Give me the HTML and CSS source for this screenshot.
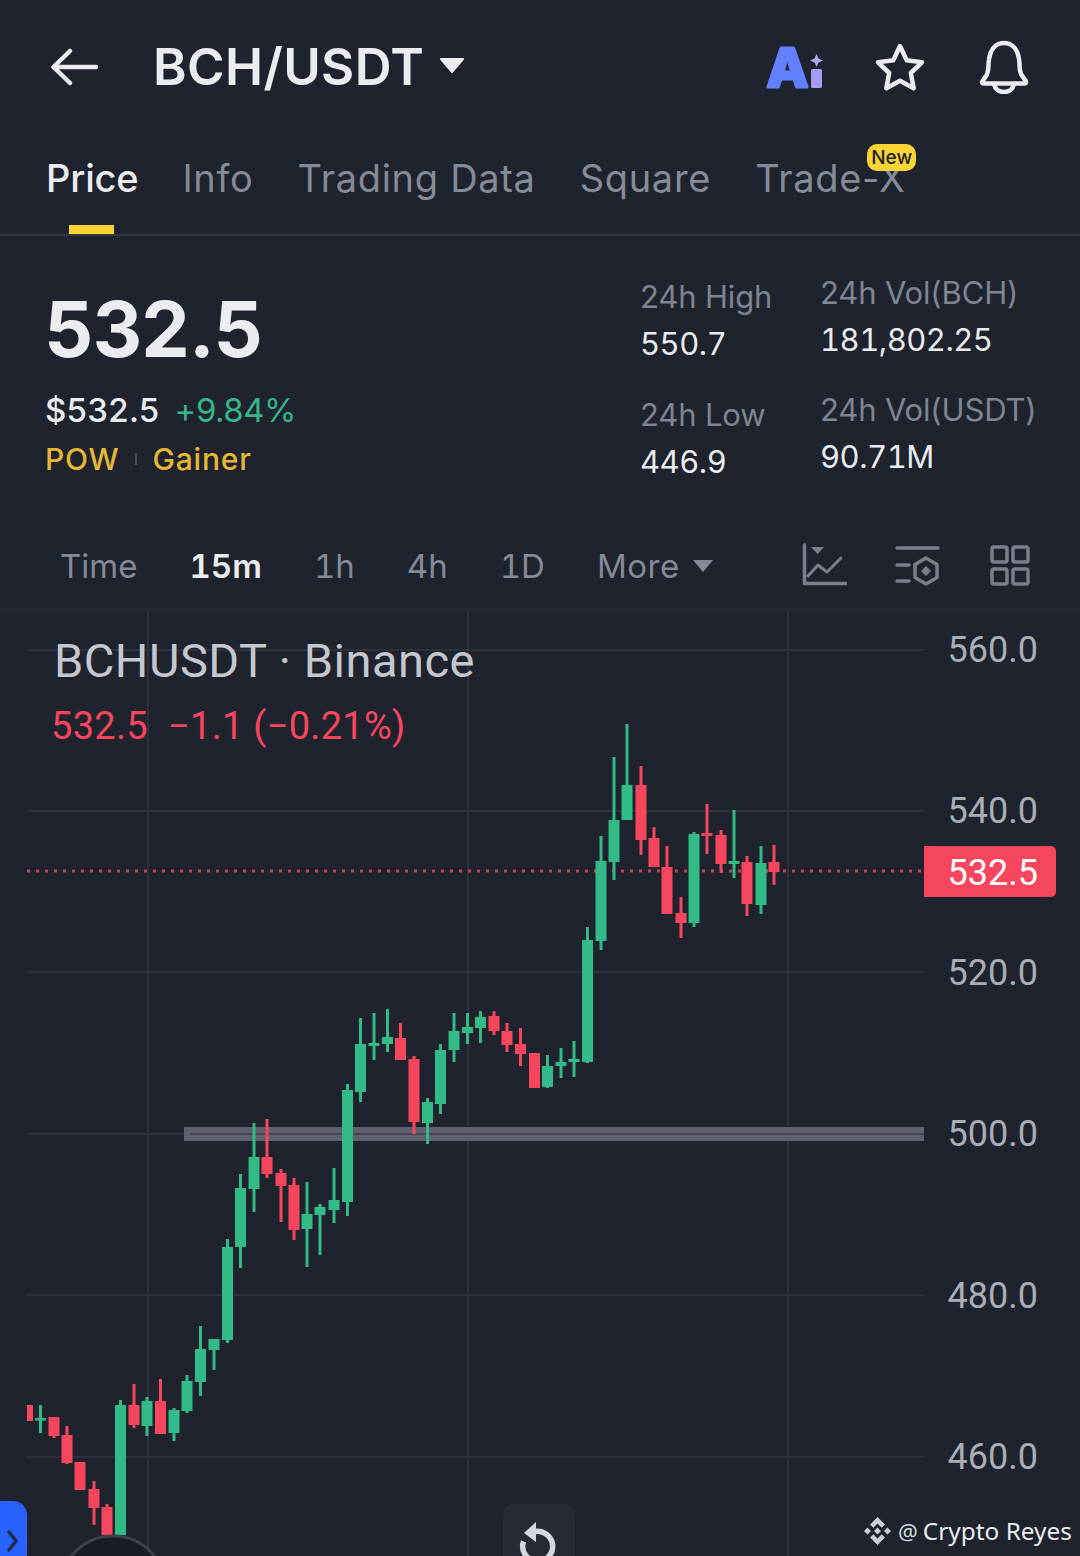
FILE: index.html
```html
<!DOCTYPE html>
<html lang="en">
<head>
<meta charset="utf-8">
<title>BCH/USDT</title>
<link rel="stylesheet" href="styles.css">
</head>
<body>
<div class="screen">
  <header class="topbar">
    <svg class="back" width="48" height="38" viewBox="0 0 48 38"><path d="M46 19H4M20 3 3.500 19 20 35"/></svg>
    <h1 class="pair">BCH/USDT</h1>
    <svg class="caret" width="26" height="17" viewBox="0 0 26 17"><path d="M2 2h22L13 15z"/></svg>
    <div class="top-actions">
      <svg class="ai" width="58" height="70" viewBox="0 0 58 70">
        <text class="ai-a" x="21.500" y="54">A</text>
        <rect class="ai-i" x="45" y="36" width="11" height="19" rx="1.500"/>
        <path class="ai-star" d="M50.500 21l2 4.500 4.500 2-4.500 2-2 4.500-2-4.500-4.500-2 4.500-2z"/>
      </svg>
      <svg class="line-icon star" width="52" height="50" viewBox="0 0 52 50"><path d="M26 4l6.700 14.300 15.300 2-11.200 10.700 2.900 15.200L26 38.700 12.300 46.200l2.900-15.200L4 20.300l15.300-2z"/></svg>
      <svg class="line-icon bell" width="52" height="54" viewBox="0 0 52 54"><path d="M4 42.500c0-2 3-4 5-8 2-5 1-9 2-15C12.500 9 18 3 26 3s13.500 6 15 16c1 6 0 10 2 15 2 4 5 6 5 8 0 1-1 1.500-2 1.500H6c-1 0-2-.5-2-1.500z"/><path d="M16 44c1 5 5 8 10 8s9-3 10-8"/></svg>
    </div>
  </header>

  <nav class="tabs">
    <a class="tab tab-active">Price</a>
    <a class="tab">Info</a>
    <a class="tab">Trading Data</a>
    <a class="tab">Square</a>
    <a class="tab tab-new">Trade-X<span class="badge">New</span></a>
  </nav>

  <section class="stats">
    <div class="price-block">
      <div class="price">532.5</div>
      <div class="sub"><span class="usd">$532.5</span><span class="change">+9.84%</span></div>
      <div class="tags"><span>POW</span><i class="tag-sep"></i><span>Gainer</span></div>
    </div>
    <div class="stat-col stat-col-a">
      <div class="stat"><div class="stat-label">24h High</div><div class="stat-value">550.7</div></div>
      <div class="stat"><div class="stat-label">24h Low</div><div class="stat-value">446.9</div></div>
    </div>
    <div class="stat-col stat-col-b">
      <div class="stat"><div class="stat-label">24h Vol(BCH)</div><div class="stat-value">181,802.25</div></div>
      <div class="stat"><div class="stat-label">24h Vol(USDT)</div><div class="stat-value">90.71M</div></div>
    </div>
  </section>

  <div class="intervals">
    <span class="iv">Time</span>
    <span class="iv iv-num iv-active">15m</span>
    <span class="iv iv-num">1h</span>
    <span class="iv iv-num">4h</span>
    <span class="iv iv-num">1D</span>
    <span class="iv iv-more">More<svg class="more-caret" width="22" height="14" viewBox="0 0 22 14"><path d="M1 1h20L11 13z"/></svg></span>
    <div class="tools">
      <svg class="tool" width="46" height="44" viewBox="0 0 46 44"><path d="M3.500 2v38.500H45"/><path class="thin" d="M7 33l10-11 9 7 14-14"/><path class="solid" d="M10 4h13l-6.500 7z"/></svg>
      <svg class="tool" width="46" height="44" viewBox="0 0 46 44"><path d="M2 5h41M2 22h12M2 38h12"/><path d="M31 15l11 6.500v13L31 41l-11-6.500v-13z"/><path class="solid" d="M31 23l5 5-5 5-5-5z"/></svg>
      <svg class="tool" width="42" height="42" viewBox="0 0 42 42"><rect x="3" y="3" width="15" height="15" rx="2"/><rect x="24" y="3" width="15" height="15" rx="2"/><rect x="3" y="25" width="15" height="15" rx="2"/><rect x="24" y="25" width="15" height="15" rx="2"/></svg>
    </div>
  </div>

  <main class="chart">
    <svg class="plot" width="1080" height="945" viewBox="0 611 1080 945">
      <path class="grid" d="M27 650H924M27 811H924M27 972H924M27 1295H924M27 1457H924M27 1134H924M148 611V1556M468 611V1556M788 611V1556"/>
      <rect class="level" x="184" y="1127" width="740" height="14"/>
      <path class="level-inner" d="M190 1134H924"/>
      <path class="last" d="M27 871H924"/>
      <path class="wick up" d="M40.500 1405V1433M120.500 1400V1535M147 1397V1436M174 1408V1441M187 1375V1413M200.500 1326V1396M214 1339V1370M227.500 1239V1343M240.500 1174V1268M254 1123V1212M307 1182V1267M320 1204V1255M334 1168V1223M347.500 1084V1216M360.500 1018V1102M374 1013V1060M387.500 1009V1052M427.500 1098V1144M440.500 1044V1114M454 1013V1062M467.500 1013V1044M480.500 1011V1043M547.500 1055V1088M561 1048V1078M574 1041V1077M587.500 927V1063M601 836V950M614 757V880M627 724V820M694 832V927M734 810V878M761 846V914"/>
      <path class="wick down" d="M54 1417V1438M67 1426V1464M94 1481V1525M107 1504V1535M134 1384V1428M160.500 1379V1434M267 1119V1178M281 1169V1222M294 1178V1240M400.500 1023V1060M414 1056V1134M494 1011V1035M507 1023V1052M520.500 1028V1066M534.500 1053V1088M641 766V855M654 827V867M667 846V914M681 897V938M707 804V854M721 830V873M747 856V916M774 845V885"/>
      <path class="body up" d="M40.500 1418V1420.500M120.500 1405V1535M147 1401V1426M174 1410V1433M187 1381V1411M200.500 1349V1382M214 1339V1350M227.500 1247V1340M240.500 1188V1247M254 1157V1189M307 1214V1229M320 1207V1215M334 1200V1210M347.500 1090V1202M360.500 1044V1092M374 1043V1046M387.500 1037V1044M427.500 1102V1123M440.500 1050V1104M454 1031V1050M467.500 1027V1033M480.500 1017V1028M547.500 1066V1087M561 1062V1066M574 1059V1062M587.500 940V1062M601 861V941M614 820V862M627 785V820M694 834V923M734 861V864M761 863V905"/>
      <path class="body down" d="M54 1417V1436M67 1435V1463M80 1462V1490M94 1489V1508M107 1507V1535M134 1405V1425M160.500 1401V1434M267 1157V1174M281 1173V1186M294 1185V1230M400.500 1038V1060M414 1059V1122M494 1016V1031M507 1031V1045M520.500 1044V1054M534.500 1053V1088M641 785V840M654 838V867M667 867V914M681 913V923M707 833V836M721 835V864M747 862V904M774 862V872"/>
      <rect class="clip-body" x="27" y="1405" width="6" height="16"/>
      <g class="axis">
        <text x="1038" y="662">560.0</text>
        <text x="1038" y="823">540.0</text>
        <text x="1038" y="985">520.0</text>
        <text x="1038" y="1146">500.0</text>
        <text x="1038" y="1308">480.0</text>
        <text x="1038" y="1469">460.0</text>
      </g>
      <path class="tag-bg" d="M924 846H1051a5 5 0 0 1 5 5V892a5 5 0 0 1-5 5H924z"/>
      <text class="tag-text" x="1038" y="885">532.5</text>
      <circle class="dial" cx="113" cy="1589" r="53"/>
    </svg>

    <div class="legend">
      <div class="legend-title">BCHUSDT · Binance</div>
      <div class="legend-ohlc"><span>532.5</span><span>−1.1 (−0.21%)</span></div>
    </div>

    <div class="side-tab"><svg width="14" height="22" viewBox="0 0 14 22"><path d="M3 2l7 9-7 9"/></svg></div>

    <div class="reset">
      <svg width="40" height="44" viewBox="0 0 40 44"><path class="reset-arc" d="M13 10.500a15 15 0 1 1-8.500 9"/><path class="reset-head" d="M17 0 5 11l12 9z"/></svg>
    </div>

    <div class="watermark">
      <svg class="bn" width="27" height="28" viewBox="0 0 27 28"><path d="M13.500 0l7.500 7.500-3.300 3.300-4.200-4.200-4.200 4.200L6 7.500zM13.500 28L21 20.500l-3.300-3.300-4.200 4.200-4.200-4.200L6 20.500zM13.500 10.500L17 14l-3.500 3.500L10 14zM3.500 10.500L7 14l-3.500 3.500L0 14zM23.500 10.500L27 14l-3.500 3.500L20 14z"/></svg>
      <span class="wm-at">@</span><span class="wm-name">Crypto Reyes</span>
    </div>
  </main>
</div>
</body>
</html>
```

FILE: styles.css
```css
* { box-sizing: border-box; }
html, body { margin: 0; padding: 0; background: #1e232e; }
.screen {
  width: 1080px; height: 1556px; overflow: hidden;
  display: flex; flex-direction: column;
  background: #1e232e; color: #eaecef;
  font-family: Inter, "Liberation Sans", sans-serif;
}

/* top bar */
.topbar { height: 134px; flex: none; display: flex; align-items: center; padding: 0 50px 0 50px; }
.back { fill: none; stroke: #eaecef; stroke-width: 4.500; stroke-linecap: round; stroke-linejoin: round; }
.pair { margin: -2px 0 0 55px; font-size: 51px; font-weight: 600; letter-spacing: 0.4px; line-height: 1; }
.caret { margin: -4px 0 0 15px; fill: #eaecef; stroke: #eaecef; stroke-width: 2; stroke-linejoin: round; }
.top-actions { margin-left: auto; display: flex; align-items: center; }
.ai { margin: 2px 50px 0 0; }
.star { margin-right: 52px; }
.ai-a { font-family: Inter, sans-serif; font-size: 54px; font-weight: 800; fill: #6381ff; stroke: #6381ff; stroke-width: 3; stroke-linejoin: round; text-anchor: middle; }
.ai-i { fill: #a79cf5; }
.ai-star { fill: #b3a5ee; }
.line-icon { fill: none; stroke: #eaecef; stroke-width: 4.500; stroke-linejoin: round; stroke-linecap: round; }

/* tabs */
.tabs { height: 102px; flex: none; display: flex; gap: 44px; padding: 21px 0 0 46px; border-bottom: 2px solid #333943; }
.tab { position: relative; font-size: 38px; line-height: 46px; color: #858a96; height: 79px; letter-spacing: 0.7px; }
.tab-active { color: #eaecef; font-weight: 500; letter-spacing: -0.2px; }
.tab-active::after { content: ""; position: absolute; left: 23px; right: 24px; bottom: 0; height: 9px; background: #fcd535; }
.badge {
  position: absolute; left: 112px; top: -11px; width: 49px; height: 27px; border-radius: 10px;
  background: #fcd535; color: #1e2329; font-size: 19px; font-weight: 500; line-height: 27px; text-align: center; letter-spacing: 0;
}

/* stats */
.stats { height: 294px; flex: none; position: relative; display: flex; padding-left: 44px; }
.price-block { width: 596px; padding-top: 46px; }
.price { font-size: 77px; font-weight: 700; line-height: 94px; letter-spacing: -0.8px; }
.sub { margin-top: 9px; padding-left: 1px; display: flex; gap: 15px; font-size: 33px; line-height: 50px; }
.usd { font-weight: 500; color: #eaecef; letter-spacing: 0.3px; }
.change { color: #35b685; letter-spacing: -0.5px; }
.tags { display: flex; align-items: center; padding-left: 1px; font-size: 30px; font-weight: 500; line-height: 48px; color: #e5b833; letter-spacing: 0.8px; }
.tag-sep { width: 2px; height: 12px; margin: 0 16px 0 15px; background: #474d57; }
.stat-col { display: flex; flex-direction: column; }
.stat-col-a { width: 180px; padding-top: 40px; gap: 27px; }
.stat-col-b { padding-top: 36px; gap: 26px; }
.stat-label { font-size: 31px; line-height: 42px; color: #7f8490; white-space: nowrap; letter-spacing: -0.15px; }
.stat-value { font-size: 31px; line-height: 46px; margin-top: 3px; color: #eaecef; white-space: nowrap; font-feature-settings: "tnum"; letter-spacing: -0.5px; }

/* intervals */
.intervals { height: 81px; flex: none; display: flex; align-items: center; gap: 52px; padding: 0 49px 6px 60px; border-bottom: 3px solid #232833; }
.iv { font-size: 33px; color: #858a96; white-space: nowrap; }
.iv-num { font-feature-settings: "tnum"; }
.iv-active { color: #eaecef; font-weight: 600; }
.iv-more { display: flex; align-items: center; gap: 12px; letter-spacing: 0.5px; }
.more-caret { fill: #858a96; }
.tools { margin: -2px 0 0 auto; display: flex; align-items: center; gap: 48px; }
.tool { fill: none; stroke: #7a7f8a; stroke-width: 3.500; stroke-linecap: round; stroke-linejoin: round; }
.tool .thin { stroke-width: 3; }
.tool .solid { fill: #7a7f8a; stroke: none; }

/* chart */
.chart { position: relative; flex: 1; min-height: 0; overflow: hidden; }
.plot { display: block; }
.grid { fill: none; stroke: #2c313c; stroke-width: 2; }
.level { fill: #5f606d; }
.level-inner { fill: none; stroke: #474853; stroke-width: 2; }
.last { fill: none; stroke: #f6465d; stroke-width: 3; stroke-dasharray: 3 6; opacity: .8; }
.wick, .body { fill: none; }
.wick { stroke-width: 3; }
.body { stroke-width: 11; }
.up { stroke: #32bb86; }
.down { stroke: #f6465d; }
.clip-body { fill: #f6465d; }
.axis text { font-family: Roboto, sans-serif; font-size: 36px; fill: #a9adb5; text-anchor: end; }
.tag-bg { fill: #f6465d; }
.tag-text { font-family: Roboto, sans-serif; font-size: 36px; fill: #fff; text-anchor: end; }
.dial { fill: #181c26; stroke: #3c414c; stroke-width: 3; }

.legend { position: absolute; left: 51px; top: 21px; font-family: Roboto, sans-serif; }
.legend-title { font-size: 47px; line-height: 58px; color: #c4c7cd; padding-left: 3px; letter-spacing: 0.5px; white-space: nowrap; }
.legend-ohlc { display: flex; gap: 20px; margin-top: 13px; font-size: 38px; line-height: 46px; color: #f6465d; letter-spacing: 0.3px; }

.side-tab { position: absolute; left: 0; bottom: 0; width: 27px; height: 55px; background: #2962ff; border-radius: 0 14px 0 0; padding: 29px 0 0 6px; }
.side-tab svg { display: block; fill: none; stroke: #1e2a4e; stroke-width: 3.500; stroke-linecap: round; stroke-linejoin: round; }

.reset { position: absolute; left: 503px; bottom: 0; width: 72px; height: 52px; background: #262b36; border-radius: 10px 10px 0 0; display: flex; justify-content: center; padding-top: 18px; }
.reset svg { flex: none; }
.reset-arc { fill: none; stroke: #d5d8de; stroke-width: 5.500; }
.reset-head { fill: #d5d8de; }

.watermark { position: absolute; right: 8px; bottom: 9px; display: flex; align-items: center; font-family: "Noto Sans", sans-serif; color: #eaecef; }
.bn { fill: #c9ccd2; margin-right: 7px; }
.wm-at { font-size: 22px; margin-right: 5px; color: #d5d8de; }
.wm-name { font-size: 24.400px; }
```
